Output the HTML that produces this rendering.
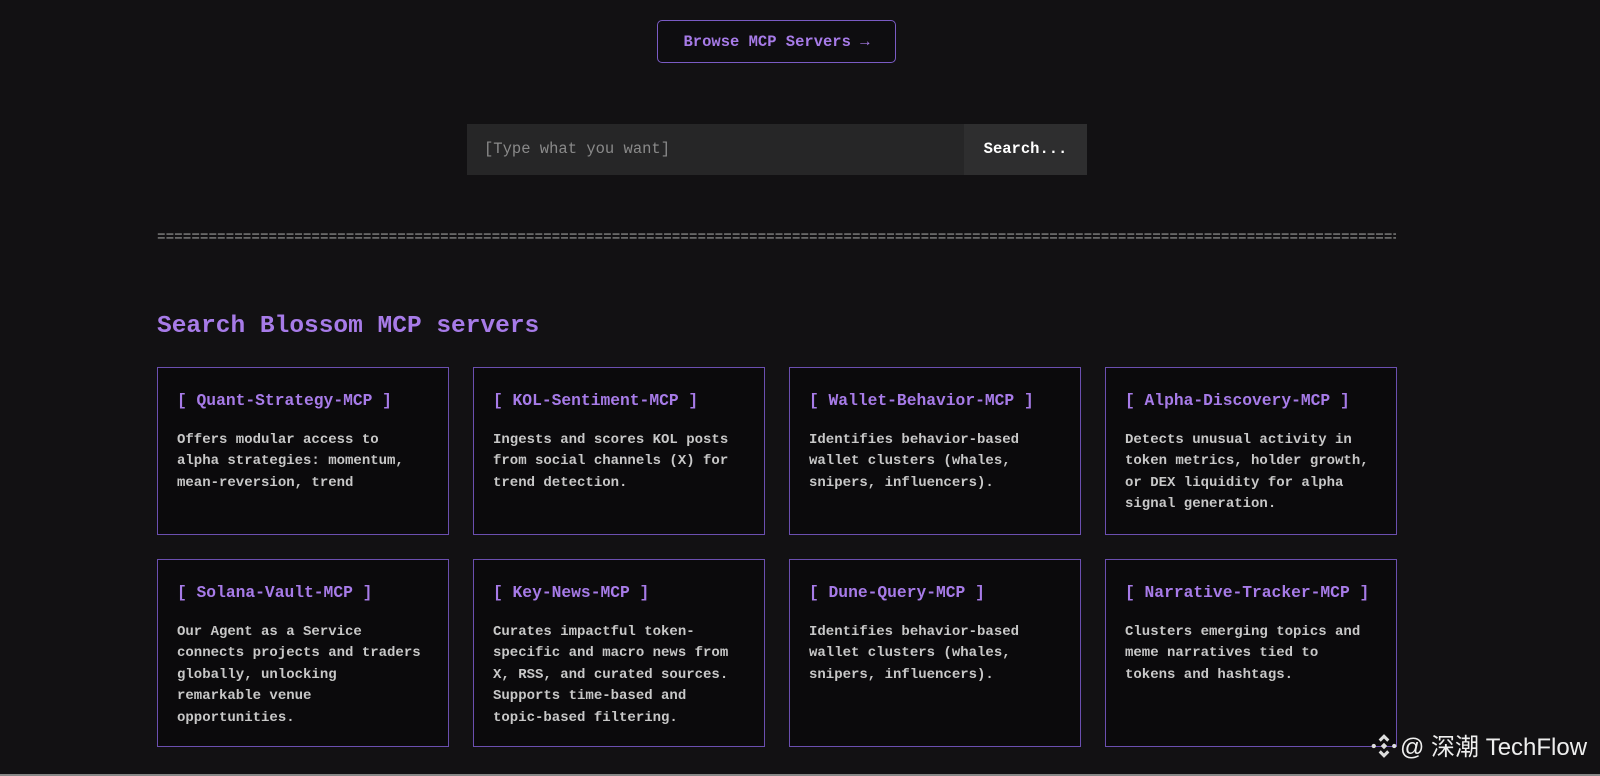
<!DOCTYPE html>
<html><head><meta charset="utf-8"><style>
*{margin:0;padding:0;box-sizing:border-box}
body{width:1600px;height:776px;background:#121113;font-family:"Liberation Mono",monospace;position:relative;overflow:hidden}
.btn{position:absolute;left:657px;top:20px;width:239px;height:43px;border:1px solid #7a5bc4;border-radius:5px;background:#0e0d10;color:#a77be8;font-size:15.5px;line-height:43px;text-align:center;font-weight:bold}
.inp{position:absolute;left:467px;top:124px;width:497px;height:51px;background:#262627;color:#8a8a8a;font-size:15.5px;line-height:51px;padding-left:17px}
.sb{position:absolute;left:964px;top:124px;width:123px;height:51px;background:#2e2e2f;color:#fff;font-size:15.5px;line-height:51px;text-align:center;font-weight:bold}
.eq{position:absolute;left:157px;top:230px;width:1239px;overflow:hidden;white-space:nowrap;color:#9a9a9a;font-size:14.3px}
h2{position:absolute;left:157px;top:313px;color:#a77be8;font-size:24.5px;font-weight:bold}
.c{position:absolute;width:292px;border:1px solid #6b4fb0;background:#0b0a0c;padding:22px 19px}
.c h3{color:#a77be8;font-size:16.3px;font-weight:bold;margin-bottom:18px;line-height:22px}
.c p{color:#c8c8c8;font-size:14px;line-height:21.4px;font-weight:bold}
.wm{position:absolute;left:1370px;top:732px;color:#eee;font-family:"Liberation Sans","Noto Sans CJK SC",sans-serif;font-size:24px;line-height:28px}
.bot{position:absolute;left:0;top:774px;width:1600px;height:2px;background:#888}
</style></head><body>
<div class="btn">Browse MCP Servers →</div>
<div class="inp">[Type what you want]</div>
<div class="sb">Search...</div>
<div class="eq">=====================================================================================================================================================</div>
<h2>Search Blossom MCP servers</h2>
<div class="c" style="left:157px;top:367px;height:168px"><h3>[ Quant-Strategy-MCP ]</h3><p>Offers modular access to<br>alpha strategies: momentum,<br>mean-reversion, trend</p></div>
<div class="c" style="left:473px;top:367px;height:168px"><h3>[ KOL-Sentiment-MCP ]</h3><p>Ingests and scores KOL posts<br>from social channels (X) for<br>trend detection.</p></div>
<div class="c" style="left:789px;top:367px;height:168px"><h3>[ Wallet-Behavior-MCP ]</h3><p>Identifies behavior-based<br>wallet clusters (whales,<br>snipers, influencers).</p></div>
<div class="c" style="left:1105px;top:367px;height:168px"><h3>[ Alpha-Discovery-MCP ]</h3><p>Detects unusual activity in<br>token metrics, holder growth,<br>or DEX liquidity for alpha<br>signal generation.</p></div>
<div class="c" style="left:157px;top:559px;height:188px"><h3>[ Solana-Vault-MCP ]</h3><p>Our Agent as a Service<br>connects projects and traders<br>globally, unlocking<br>remarkable venue<br>opportunities.</p></div>
<div class="c" style="left:473px;top:559px;height:188px"><h3>[ Key-News-MCP ]</h3><p>Curates impactful token-<br>specific and macro news from<br>X, RSS, and curated sources.<br>Supports time-based and<br>topic-based filtering.</p></div>
<div class="c" style="left:789px;top:559px;height:188px"><h3>[ Dune-Query-MCP ]</h3><p>Identifies behavior-based<br>wallet clusters (whales,<br>snipers, influencers).</p></div>
<div class="c" style="left:1105px;top:559px;height:188px"><h3>[ Narrative-Tracker-MCP ]</h3><p>Clusters emerging topics and<br>meme narratives tied to<br>tokens and hashtags.</p></div>
<div class="wm"><svg width="28" height="28" viewBox="0 0 26 26" style="vertical-align:-5px;margin-right:2px"><g fill="#ddd"><path d="M13 2l5 5-2 2-3-3-3 3-2-2z"/><path d="M13 24l5-5-2-2-3 3-3-3-2 2z"/><path d="M13 10l3 3-3 3-3-3z"/><circle cx="3.5" cy="13" r="2"/><circle cx="22.5" cy="13" r="2"/></g></svg>@ 深潮 TechFlow</div>
<div class="bot"></div>
</body></html>
